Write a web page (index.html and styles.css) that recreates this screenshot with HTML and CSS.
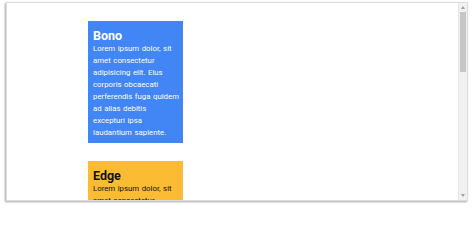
FILE: index.html
```html
<!DOCTYPE html>
<html>
<head>
<meta charset="utf-8">
<link rel="stylesheet" href="styles.css">
</head>
<body>
<div class="frame">
  <div class="content">
    <div class="card blue">
      <h2>Bono</h2>
      <p>Lorem ipsum dolor, sit amet consectetur adipisicing elit. Eius corporis obcaecati perferendis fuga quidem ad alias debitis excepturi ipsa laudantium sapiente.</p>
    </div>
    <div class="card yellow">
      <h2>Edge</h2>
      <p>Lorem ipsum dolor, sit amet consectetur adipisicing elit. Eius corporis obcaecati perferendis fuga quidem ad alias debitis excepturi ipsa laudantium sapiente.</p>
    </div>
  </div>
  <div class="scrollbar">
    <div class="arrow up"></div>
    <div class="track">
      <div class="thumb"></div>
    </div>
    <div class="arrow down"></div>
  </div>
</div>
</body>
</html>
```
FILE: styles.css
```css
html, body {
  margin: 0;
  padding: 0;
  background: #fff;
  overflow: hidden;
}
body {
  font-family: Roboto, "Liberation Sans", sans-serif;
  padding: 2px 6px 0 6px;
  height: 204px;
}
.frame {
  width: 460px;
  height: 197px;
  border: 1px solid #dcdcdc;
  box-shadow: -1px 1px 2px rgba(0,0,0,0.35);
  background: #fff;
  display: flex;
  overflow: hidden;
}
.content {
  flex: 1;
  padding: 18px 0 0 81px;
  display: flex;
  flex-direction: column;
  gap: 18px;
  align-items: flex-start;
  overflow: hidden;
}
.card {
  width: 86.5px;
  padding: 7px 3.5px 4px 5px;
  flex-shrink: 0;
}
.card h2 {
  margin: 0;
  font-size: 12.5px;
  font-weight: 700;
  line-height: 15px;
}
.card p {
  margin: 0;
  font-size: 7.8px;
  line-height: 12px;
  word-spacing: 0.6px;
}
.blue {
  background: #4285f4;
  color: #fff;
}
.yellow {
  background: #fbbc34;
  color: #111;
}
.scrollbar {
  width: 8px;
  background: #f1f1f1;
  border-left: 1px solid #e6e6e6;
  display: flex;
  flex-direction: column;
  align-items: center;
}
.arrow {
  width: 0;
  height: 0;
  margin: 3px 0;
  border-left: 2px solid transparent;
  border-right: 2px solid transparent;
}
.arrow.up {
  border-bottom: 3px solid #a0a0a0;
}
.arrow.down {
  border-top: 3px solid #a0a0a0;
}
.track {
  flex: 1;
  align-self: stretch;
}
.thumb {
  height: 60px;
  margin: 0 1px;
  background: #c6c6c6;
}
```
